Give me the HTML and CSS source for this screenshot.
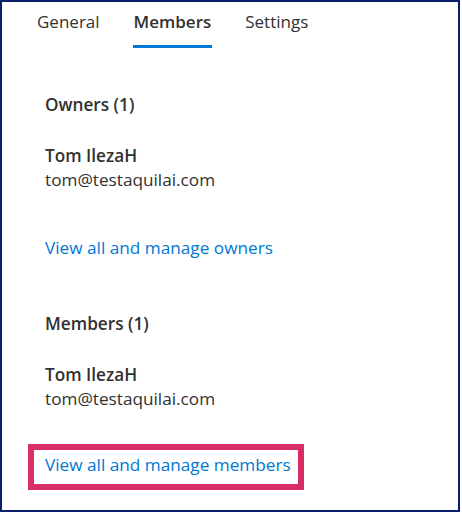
FILE: index.html
```html
<!DOCTYPE html>
<html>
<head>
<meta charset="utf-8">
<link rel="stylesheet" href="styles.css">
</head>
<body>
<div class="frame">
  <nav class="tabs">
    <span class="tab">General</span>
    <span class="tab active">Members</span>
    <span class="tab">Settings</span>
  </nav>
  <section class="section">
    <h2 class="heading">Owners (1)</h2>
    <div class="person">
      <div class="name">Tom IlezaH</div>
      <div class="email">tom@testaquilai.com</div>
    </div>
    <a class="link">View all and manage owners</a>
  </section>
  <section class="section second">
    <h2 class="heading">Members (1)</h2>
    <div class="person">
      <div class="name">Tom IlezaH</div>
      <div class="email">tom@testaquilai.com</div>
    </div>
    <div class="highlight"><a class="link">View all and manage members</a></div>
  </section>
</div>
</body>
</html>
```
FILE: styles.css
```css
* { box-sizing: border-box; }
html, body { margin: 0; padding: 0; background: #fff; }
body { font-family: "Open Sans", "Noto Sans", sans-serif; color: #323130; }
.frame {
  width: 460px;
  height: 512px;
  border: 2px solid #0c1f6b;
  overflow: hidden;
}
.tabs {
  display: flex;
  padding-left: 35px;
  height: 46px;
}
.tab {
  font-size: 17px;
  line-height: 40px;
  height: 46px;
  margin-right: 34px;
  position: relative;
}
.tab.active { font-weight: 600; }
.tab.active::after {
  content: "";
  position: absolute;
  left: -1px; right: -1px; bottom: 0;
  height: 3px;
  background: #0078d4;
}
.section { padding-left: 43px; font-size: 17.2px; }
.heading { margin: 44.6px 0 0; font-size: 17.2px; font-weight: 600; line-height: 24px; }
.second { padding-top: 7.4px; }
.person { margin-top: 27px; }
.name { font-weight: 600; line-height: 24px; }
.email { line-height: 24px; }
.link { display: inline-block; color: #0078d4; line-height: 24px; margin-top: 44px; }
.highlight {
  margin-left: -17px;
  margin-top: 33.4px;
  width: 276px;
  height: 46px;
  border: 6px solid #d92d66;
  padding: 2.6px 0 0 11px;
}
.highlight .link { margin-top: 0; }
```
